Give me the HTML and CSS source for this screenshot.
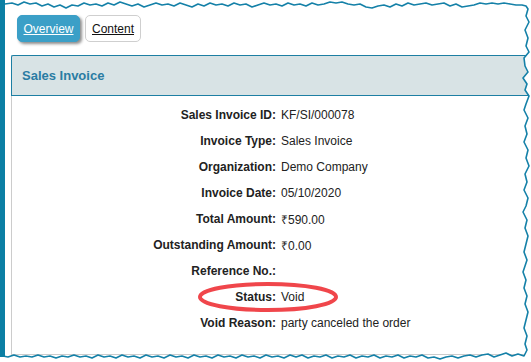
FILE: index.html
```html
<!DOCTYPE html>
<html>
<head>
<meta charset="utf-8">
<link rel="stylesheet" href="styles.css">
</head>
<body>
<div class="page">
  <div class="tabs">
    <a class="tab tab-active">Overview</a>
    <a class="tab">Content</a>
  </div>
  <div class="panel">
    <div class="panel-head">Sales Invoice</div>
    <div class="panel-body">
      <div class="lbl">Sales Invoice ID:</div><div class="val">KF/SI/000078</div>
      <div class="lbl">Invoice Type:</div><div class="val">Sales Invoice</div>
      <div class="lbl">Organization:</div><div class="val">Demo Company</div>
      <div class="lbl">Invoice Date:</div><div class="val">05/10/2020</div>
      <div class="lbl">Total Amount:</div><div class="val">₹590.00</div>
      <div class="lbl">Outstanding Amount:</div><div class="val">₹0.00</div>
      <div class="lbl">Reference No.:</div><div class="val"></div>
      <div class="lbl">Status:</div><div class="val">Void</div>
      <div class="lbl">Void Reason:</div><div class="val">party canceled the order</div>
    </div>
  </div>
</div>
<svg class="frame" width="531" height="362" viewBox="0 0 531 362">
  <path class="outside" fill-rule="evenodd" d="M0,0 L531,0 L531,362 L0,362 Z M5,4 L12,3 18,5 24,2 30,4 36,3 42,6 48,4 54,7 60,5 66,8 72,5 78,6 84,3 90,5 96,4 102,6 108,3 114,5 120,2 126,4 132,6 138,4 144,7 150,5 156,3 162,5 168,4 174,6 180,3 186,5 192,7 198,4 204,6 210,3 216,5 222,4 228,6 234,3 240,5 246,4 252,7 258,5 264,3 270,5 276,4 282,6 288,3 294,5 300,4 306,6 312,3 318,5 324,4 330,2 336,3 342,2 348,4 354,5 360,4 366,7 372,8 378,6 384,5 390,7 396,4 402,6 408,3 414,5 420,4 426,3 432,5 438,4 444,3 450,6 456,4 462,7 468,6 474,5 480,3 486,4 492,3 498,4 504,3 510,4 516,5 522,5 526,6 528,9 526,16 529,22 525,30 528,38 526,46 529,52 524,58 525,66 528,72 523,78 527,84 525,90 529,96 526,104 524,110 528,118 525,126 527,134 524,142 528,150 526,158 529,166 525,174 527,182 524,190 528,198 526,206 523,212 527,220 525,228 528,236 526,244 524,252 527,260 525,266 523,272 526,280 524,288 527,296 525,304 528,312 526,320 524,328 527,336 525,344 527,350 524,356 518,354 512,356 506,353 500,355 494,357 488,354 482,355 476,357 470,355 464,356 458,358 452,356 446,357 440,359 434,357 428,358 422,355 416,357 410,356 404,358 398,355 392,357 386,356 380,358 374,355 368,357 362,356 356,358 350,355 344,357 338,356 332,358 326,355 320,357 314,356 308,358 302,355 296,357 290,355 284,358 278,356 272,357 266,355 260,358 254,356 248,357 242,355 236,358 230,356 224,357 218,355 212,358 206,356 200,357 194,355 188,358 182,356 176,357 170,355 164,358 158,356 152,357 146,355 140,358 134,356 128,357 122,355 116,358 110,356 104,357 98,355 92,358 86,356 80,357 74,355 68,357 62,356 56,358 50,356 44,357 38,355 32,357 26,356 20,357 14,355 8,357 5,356 Z"/>
  <polyline class="edge" points="5,4 12,3 18,5 24,2 30,4 36,3 42,6 48,4 54,7 60,5 66,8 72,5 78,6 84,3 90,5 96,4 102,6 108,3 114,5 120,2 126,4 132,6 138,4 144,7 150,5 156,3 162,5 168,4 174,6 180,3 186,5 192,7 198,4 204,6 210,3 216,5 222,4 228,6 234,3 240,5 246,4 252,7 258,5 264,3 270,5 276,4 282,6 288,3 294,5 300,4 306,6 312,3 318,5 324,4 330,2 336,3 342,2 348,4 354,5 360,4 366,7 372,8 378,6 384,5 390,7 396,4 402,6 408,3 414,5 420,4 426,3 432,5 438,4 444,3 450,6 456,4 462,7 468,6 474,5 480,3 486,4 492,3 498,4 504,3 510,4 516,5 522,5 526,6 528,9 526,16 529,22 525,30 528,38 526,46 529,52 524,58 525,66 528,72 523,78 527,84 525,90 529,96 526,104 524,110 528,118 525,126 527,134 524,142 528,150 526,158 529,166 525,174 527,182 524,190 528,198 526,206 523,212 527,220 525,228 528,236 526,244 524,252 527,260 525,266 523,272 526,280 524,288 527,296 525,304 528,312 526,320 524,328 527,336 525,344 527,350 524,356 518,354 512,356 506,353 500,355 494,357 488,354 482,355 476,357 470,355 464,356 458,358 452,356 446,357 440,359 434,357 428,358 422,355 416,357 410,356 404,358 398,355 392,357 386,356 380,358 374,355 368,357 362,356 356,358 350,355 344,357 338,356 332,358 326,355 320,357 314,356 308,358 302,355 296,357 290,355 284,358 278,356 272,357 266,355 260,358 254,356 248,357 242,355 236,358 230,356 224,357 218,355 212,358 206,356 200,357 194,355 188,358 182,356 176,357 170,355 164,358 158,356 152,357 146,355 140,358 134,356 128,357 122,355 116,358 110,356 104,357 98,355 92,358 86,356 80,357 74,355 68,357 62,356 56,358 50,356 44,357 38,355 32,357 26,356 20,357 14,355 8,357 3,356"/>
  <rect class="sidebar" x="0" y="0" width="5" height="357"/>
  <ellipse class="mark" cx="268" cy="297" rx="68" ry="13"/>
</svg>
</body>
</html>
```
FILE: styles.css
```css
html, body {
  margin: 0;
  padding: 0;
  background: #fff;
  width: 531px;
  height: 362px;
  overflow: hidden;
}
body {
  position: relative;
  font-family: "Liberation Sans", Arial, sans-serif;
  font-size: 12px;
  color: #222;
}
.page {
  padding: 15px 0 0 11px;
}
.tabs {
  display: flex;
  gap: 5px;
  margin-left: 6px;
  height: 27px;
}
.tab {
  display: flex;
  align-items: center;
  box-sizing: border-box;
  height: 27px;
  padding: 0 6px;
  border-radius: 5px;
  border: 1px solid #cfcfcf;
  background: #fff;
  color: #111;
  text-decoration: underline;
  font-size: 12px;
}
.tab-active {
  width: 63px;
  justify-content: center;
  background: #3b9fc7;
  border-color: #3b9fc7;
  color: #fff;
  box-shadow: 2px 2px 3px rgba(0, 0, 0, 0.45);
}
.panel {
  margin-top: 13px;
  width: 530px;
}
.panel-head {
  box-sizing: border-box;
  height: 41px;
  border-top: 1px solid #1d7fa3;
  border-bottom: 1px solid #1d7fa3;
  border-left: 1px solid #1d7fa3;
  background: #d8e3e5;
  color: #2a7ca3;
  font-weight: bold;
  font-size: 13px;
  padding-left: 10px;
  padding-bottom: 1px;
  display: flex;
  align-items: center;
  border-top-left-radius: 2px;
}
.panel-body {
  border-left: 1px solid #cccccc;
  border-bottom: 1px solid #cccccc;
  padding: 6px 0 18px;
  display: grid;
  grid-template-columns: 264px 1fr;
  grid-auto-rows: 26px;
  column-gap: 5px;
  align-items: center;
}
.lbl {
  text-align: right;
  font-weight: bold;
}
.val {
  text-align: left;
}
.frame {
  position: absolute;
  left: 0;
  top: 0;
}
.outside {
  fill: #ffffff;
}
.edge {
  fill: none;
  stroke: #1581a8;
  stroke-width: 1.6;
  stroke-linejoin: round;
}
.sidebar {
  fill: #0b7fa4;
}
.mark {
  fill: none;
  stroke: #f0464b;
  stroke-width: 4;
}
```
